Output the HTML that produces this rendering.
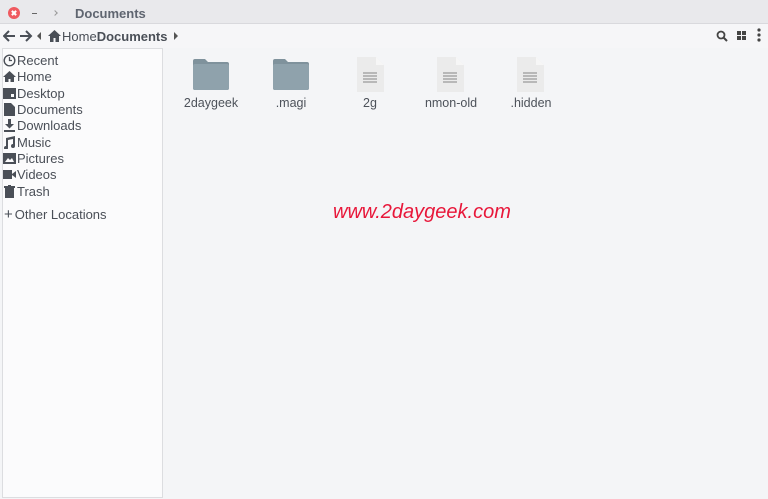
<!DOCTYPE html>
<html><head><meta charset="utf-8"><style>
*{margin:0;padding:0;box-sizing:border-box}
body{width:768px;height:499px;overflow:hidden;background:#f4f5f7;font-family:"Liberation Sans",sans-serif;color:#4a4f57;position:relative}
.title{position:absolute;left:0;top:0;width:768px;height:24px;background:#e9e9ec;border-bottom:1px solid #d9d9dd}
.tb{position:absolute;top:24px;left:0;width:768px;height:24px;background:#f6f6f8}
.side{position:absolute;left:2px;top:48px;width:161px;height:450px;background:#fbfbfc;border:1px solid #dcdde0}
.si{position:absolute;left:0;font-size:13px;color:#4a4f57;display:flex;align-items:center;height:16px}
.si svg{width:13px;height:13px;margin-right:1px}
.lbl{position:absolute;font-size:12.5px;color:#4d525a;text-align:center;width:80px}
</style></head><body>
<div class="title">
  <div style="position:absolute;left:8px;top:7px;width:12px;height:12px;border-radius:50%;background:#ef5a60"></div>
  <div style="position:absolute;left:11px;top:12px;width:6px;height:2px;background:#fff;transform:rotate(45deg)"></div>
  <div style="position:absolute;left:11px;top:12px;width:6px;height:2px;background:#fff;transform:rotate(-45deg)"></div>
  <div style="position:absolute;left:32px;top:13px;width:5px;height:1px;background:#666"></div>
  <div style="position:absolute;left:53px;top:11px;width:4px;height:4px;border:1px solid #999;border-width:0 1px 1px 0;transform:rotate(-45deg)"></div>
  <div style="position:absolute;left:75px;top:6px;font-size:13px;font-weight:bold;color:#5f6570">Documents</div>
</div>
<div class="tb">
  <svg style="position:absolute;left:3px;top:6px" width="30" height="12" viewBox="0 0 30 12"><path d="M1 6h11M6 1L1 6l5 5" fill="none" stroke="#4a4f57" stroke-width="2"/><path d="M17 6h11M23 1l5 5-5 5" fill="none" stroke="#4a4f57" stroke-width="2"/></svg>
  <div style="position:absolute;left:37px;top:8px;width:0;height:0;border:4px solid transparent;border-right:4px solid #555;border-left:0"></div>
  <svg style="position:absolute;left:48px;top:6px" width="13" height="12" viewBox="0 0 13 12"><path d="M6.5 0L0 6h2v6h3.5V8h2v4H11V6h2z" fill="#4a4f57"/></svg>
  <div style="position:absolute;left:62px;top:5px;font-size:13px;color:#4a4f57">Home<b>Documents</b></div>
  <div style="position:absolute;left:174px;top:8px;width:0;height:0;border-top:4px solid transparent;border-bottom:4px solid transparent;border-left:4px solid #555"></div>
  <svg style="position:absolute;left:716px;top:6px" width="12" height="12" viewBox="0 0 12 12"><circle cx="5" cy="5" r="3.5" fill="none" stroke="#444" stroke-width="1.8"/><path d="M7.5 7.5L11 11" stroke="#444" stroke-width="2"/></svg>
  <svg style="position:absolute;left:737px;top:7px" width="9" height="9" viewBox="0 0 9 9" fill="#444"><rect width="4" height="4"/><rect x="5" width="4" height="4"/><rect y="5" width="4" height="4"/><rect x="5" y="5" width="4" height="4"/></svg>
  <svg style="position:absolute;left:757px;top:4px" width="4" height="14" viewBox="0 0 4 14" fill="#444"><circle cx="2" cy="2" r="1.6"/><circle cx="2" cy="7" r="1.6"/><circle cx="2" cy="12" r="1.6"/></svg>
</div>
<div class="side">
  <div class="si" style="top:3px"><svg viewBox="0 0 13 13"><circle cx="6.5" cy="6.5" r="5.3" fill="none" stroke="#4a4f57" stroke-width="1.4"/><path d="M6.5 3v3.5H9" fill="none" stroke="#4a4f57" stroke-width="1.3"/></svg>Recent</div>
  <div class="si" style="top:19px"><svg viewBox="0 0 13 13"><path d="M6.5 1L0 7h2v5h3.5V9h2v3H11V7h2z" fill="#4a4f57"/></svg>Home</div>
  <div class="si" style="top:36px"><svg viewBox="0 0 13 13"><rect x="0" y="1" width="13" height="11" fill="#4a4f57"/><rect x="8" y="7" width="3" height="3" fill="#fbfbfc"/></svg>Desktop</div>
  <div class="si" style="top:52px"><svg viewBox="0 0 13 13"><path d="M1 0h7l4 4v9H1z" fill="#4a4f57"/></svg>Documents</div>
  <div class="si" style="top:68px"><svg viewBox="0 0 13 13"><path d="M5 0h3v5h3L6.5 9.5 2 5h3zM1 11h11v2H1z" fill="#4a4f57"/></svg>Downloads</div>
  <div class="si" style="top:85px"><svg viewBox="0 0 13 13"><path d="M3 2l9-2v10a2 2 0 1 1-2-2V3L5 4v8a2 2 0 1 1-2-2z" fill="#4a4f57"/></svg>Music</div>
  <div class="si" style="top:101px"><svg viewBox="0 0 13 13"><rect x="0" y="1" width="13" height="11" fill="#4a4f57"/><path d="M2 10l3-4 2 2 2-2 2 4z" fill="#fbfbfc"/></svg>Pictures</div>
  <div class="si" style="top:117px"><svg viewBox="0 0 13 13"><rect x="0" y="2" width="9" height="9" fill="#4a4f57"/><path d="M9 6l4-3v7L9 7z" fill="#4a4f57"/></svg>Videos</div>
  <div class="si" style="top:134px"><svg viewBox="0 0 13 13"><path d="M1 1h11v2H1zM2 3h9v10H2z M5 0h3v1H5z" fill="#4a4f57"/></svg>Trash</div>
  <div class="si" style="top:157px;left:1px;font-size:13px"><span style="font-size:15px;margin-right:2px">+</span>Other Locations</div>
</div>
<svg style="position:absolute;left:193px;top:58px" width="36" height="32" viewBox="0 0 36 32"><path d="M2 1h10l3 3h19a2 2 0 0 1 2 2v24a2 2 0 0 1-2 2H2a2 2 0 0 1-2-2V3a2 2 0 0 1 2-2z" fill="#7f929c"/><rect x="0" y="6" width="36" height="26" rx="2" fill="#8fa2ac"/></svg>
<svg style="position:absolute;left:273px;top:58px" width="36" height="32" viewBox="0 0 36 32"><path d="M2 1h10l3 3h19a2 2 0 0 1 2 2v24a2 2 0 0 1-2 2H2a2 2 0 0 1-2-2V3a2 2 0 0 1 2-2z" fill="#7f929c"/><rect x="0" y="6" width="36" height="26" rx="2" fill="#8fa2ac"/></svg>
<svg style="position:absolute;left:356px;top:57px" width="28" height="35" viewBox="0 0 28 35"><path d="M1 0h19l8 8v27H1z" fill="#ebebeb"/><path d="M20 0v8h8z" fill="#f6f6f6"/><path d="M7 16h14M7 19h14M7 22h14M7 25h14" stroke="#a8a8a8" stroke-width="1.4"/></svg>
<svg style="position:absolute;left:436px;top:57px" width="28" height="35" viewBox="0 0 28 35"><path d="M1 0h19l8 8v27H1z" fill="#ebebeb"/><path d="M20 0v8h8z" fill="#f6f6f6"/><path d="M7 16h14M7 19h14M7 22h14M7 25h14" stroke="#a8a8a8" stroke-width="1.4"/></svg>
<svg style="position:absolute;left:516px;top:57px" width="28" height="35" viewBox="0 0 28 35"><path d="M1 0h19l8 8v27H1z" fill="#ebebeb"/><path d="M20 0v8h8z" fill="#f6f6f6"/><path d="M7 16h14M7 19h14M7 22h14M7 25h14" stroke="#a8a8a8" stroke-width="1.4"/></svg>
<div class="lbl" style="left:171px;top:96px">2daygeek</div>
<div class="lbl" style="left:251px;top:96px">.magi</div>
<div class="lbl" style="left:330px;top:96px">2g</div>
<div class="lbl" style="left:411px;top:96px">nmon-old</div>
<div class="lbl" style="left:491px;top:96px">.hidden</div>
<div style="position:absolute;left:333px;top:201px;font-size:20px;font-style:italic;color:#e8173a">www.2daygeek.com</div>
</body></html>
